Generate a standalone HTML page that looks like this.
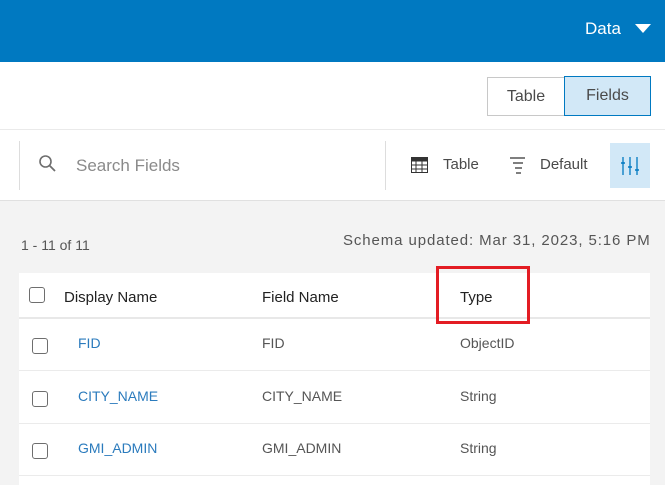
<!DOCTYPE html>
<html><head><style>
*{margin:0;padding:0;box-sizing:border-box}
body{width:665px;height:485px;overflow:hidden;background:#f3f3f3;font-family:"Liberation Sans",sans-serif;position:relative;color:#323232}
.a{position:absolute;white-space:nowrap}
.cb{position:absolute;width:16px;height:16px;border:1.5px solid #6e6e6e;border-radius:3px;background:#fff}
</style></head><body>
<div class="a" style="left:0;top:0;width:665px;height:62px;background:#0079c1"></div>
<div class="a" style="left:585px;top:19px;color:#fff;font-size:17px">Data</div>
<svg class="a" style="left:635px;top:24px" width="16" height="10"><path d="M0 0H16L8 9Z" fill="#fff"/></svg>
<div class="a" style="left:0;top:62px;width:665px;height:139px;background:#fff;border-bottom:1px solid #e0e0e0"></div>
<div class="a" style="left:0;top:129px;width:665px;height:1px;background:#eaeaea"></div>
<div class="a" style="left:487px;top:77px;width:78px;height:39px;border:1px solid #c8c8c8;font-size:16px;line-height:37px;text-align:center;color:#4a4a4a">Table</div>
<div class="a" style="left:564px;top:76px;width:87px;height:40px;border:1px solid #0079c1;background:#d2e8f7;font-size:16px;line-height:38px;text-align:center;color:#4a4a4a">Fields</div>
<div class="a" style="left:19px;top:141px;width:1px;height:49px;background:#ddd"></div>
<div class="a" style="left:385px;top:141px;width:1px;height:49px;background:#ddd"></div>
<svg class="a" style="left:38px;top:154px" width="20" height="20"><circle cx="7.5" cy="7.5" r="5.5" fill="none" stroke="#6e6e6e" stroke-width="1.6"/><path d="M11.5 11.5L17 17" stroke="#6e6e6e" stroke-width="1.8"/></svg>
<div class="a" style="left:76px;top:156px;font-size:17px;color:#8a8a8a">Search Fields</div>
<svg class="a" style="left:411px;top:157px" width="18" height="17"><rect x="0.5" y="0.5" width="16" height="15" fill="none" stroke="#333"/><path d="M0 4H17M0 8H17M0 12H17M5 4V16M11 4V16" stroke="#333"/><rect x="0" y="0" width="17" height="4" fill="#333"/></svg>
<div class="a" style="left:443px;top:156px;font-size:15px;color:#4a4a4a">Table</div>
<svg class="a" style="left:510px;top:157px" width="16" height="17"><path d="M0 1H15M3 6H13M5 11H12M6 16H11" stroke="#333" stroke-width="1.2"/></svg>
<div class="a" style="left:540px;top:156px;font-size:15px;color:#4a4a4a">Default</div>
<div class="a" style="left:610px;top:143px;width:40px;height:45px;background:#d2e8f7"></div>
<svg class="a" style="left:620px;top:156px" width="20" height="20"><path d="M3 1V19M10 1V19M17 1V19" stroke="#0079c1" stroke-width="1.3"/><path d="M1 7H5M8 11H12M15 14H19" stroke="#0079c1" stroke-width="1.5"/></svg>
<div class="a" style="left:21px;top:237px;font-size:14px;color:#555">1 - 11 of 11</div>
<div class="a" style="left:343px;top:232px;font-size:15px;color:#555;letter-spacing:0.9px">Schema updated: Mar 31, 2023, 5:16 PM</div>
<div class="a" style="left:19px;top:273px;width:631px;height:212px;background:#fff"></div>
<div class="a" style="left:19px;top:317px;width:631px;height:2px;background:#e8e8e8"></div>
<div class="a" style="left:19px;top:370px;width:631px;height:1px;background:#ebebeb"></div>
<div class="a" style="left:19px;top:423px;width:631px;height:1px;background:#ebebeb"></div>
<div class="a" style="left:19px;top:475px;width:631px;height:1px;background:#ebebeb"></div>
<div class="cb" style="left:29px;top:287px"></div>
<div class="a" style="left:64px;top:289px;font-size:15px;color:#222">Display Name</div>
<div class="a" style="left:262px;top:289px;font-size:15px;color:#222">Field Name</div>
<div class="a" style="left:460px;top:289px;font-size:15px;color:#222">Type</div>
<div class="a" style="left:436px;top:266px;width:94px;height:58px;border:3px solid #e31c23"></div>
<div class="cb" style="left:32px;top:338px"></div>
<div class="a" style="left:78px;top:335px;font-size:14px;color:#2b7bbd">FID</div>
<div class="a" style="left:262px;top:335px;font-size:14px;color:#555">FID</div>
<div class="a" style="left:460px;top:335px;font-size:14px;color:#555">ObjectID</div>
<div class="cb" style="left:32px;top:391px"></div>
<div class="a" style="left:78px;top:388px;font-size:14px;color:#2b7bbd">CITY_NAME</div>
<div class="a" style="left:262px;top:388px;font-size:14px;color:#555">CITY_NAME</div>
<div class="a" style="left:460px;top:388px;font-size:14px;color:#555">String</div>
<div class="cb" style="left:32px;top:443px"></div>
<div class="a" style="left:78px;top:440px;font-size:14px;color:#2b7bbd">GMI_ADMIN</div>
<div class="a" style="left:262px;top:440px;font-size:14px;color:#555">GMI_ADMIN</div>
<div class="a" style="left:460px;top:440px;font-size:14px;color:#555">String</div>
</body></html>
